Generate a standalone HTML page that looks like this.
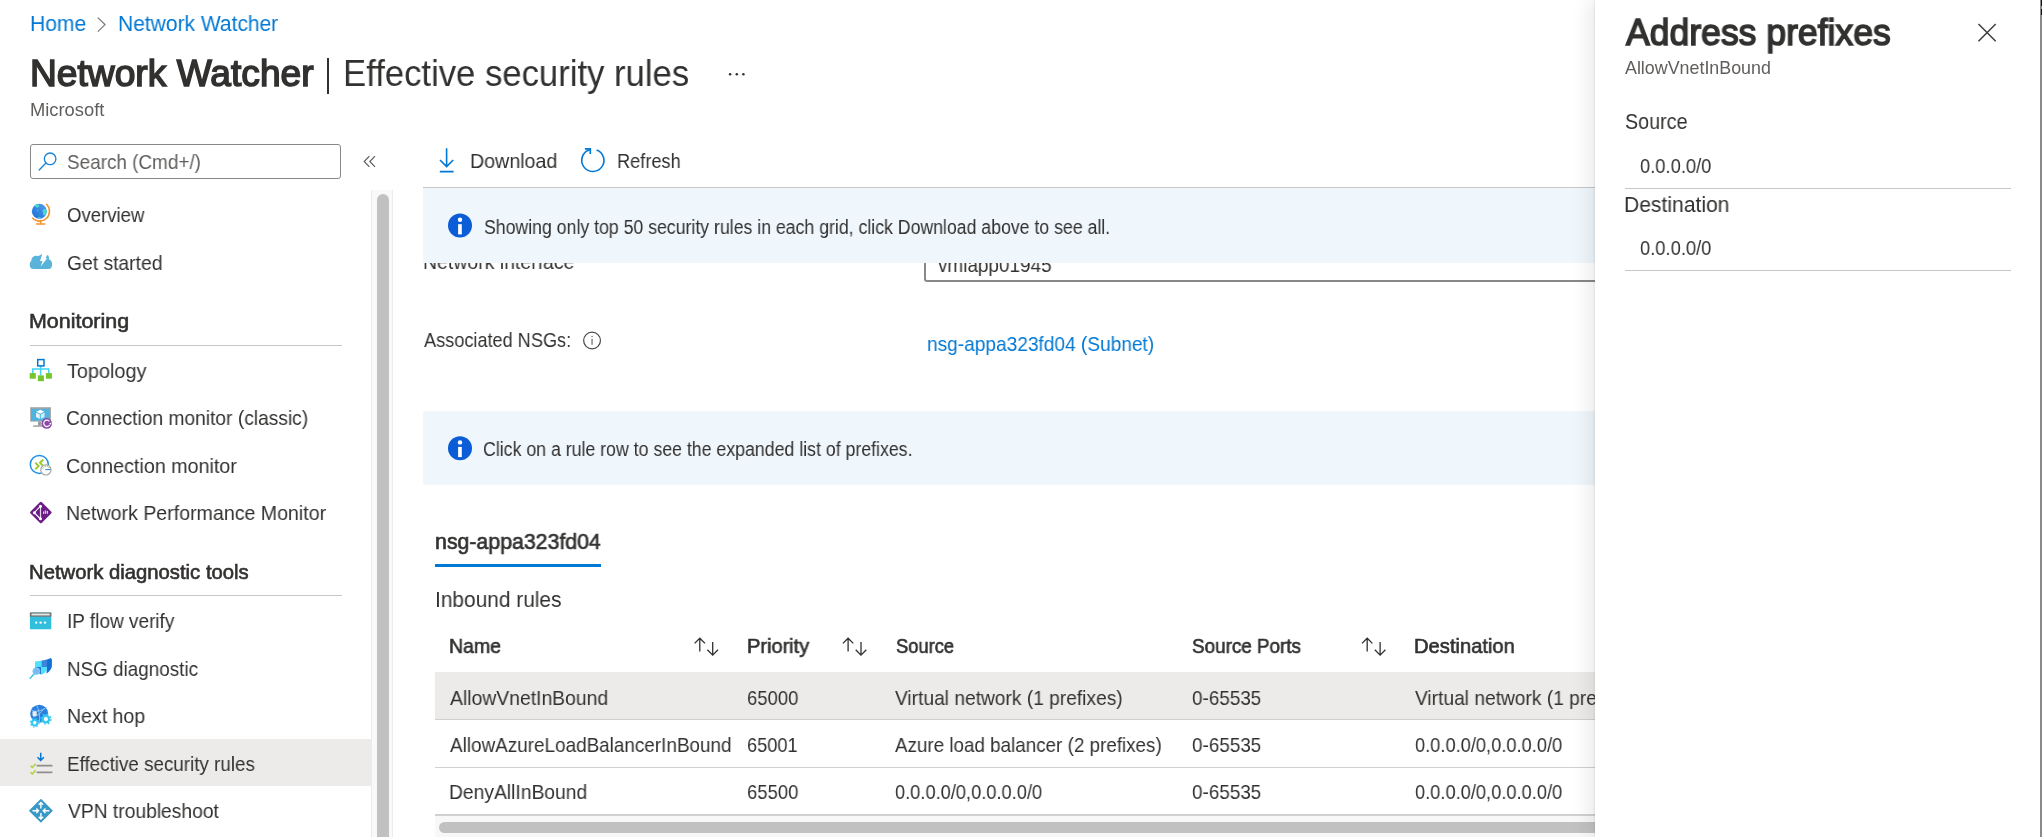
<!DOCTYPE html>
<html><head><meta charset="utf-8"><title>Network Watcher | Effective security rules</title>
<style>
html,body{margin:0;padding:0;background:#fff;}
body{width:2042px;height:837px;overflow:hidden;position:relative;font-family:"Liberation Sans",sans-serif;color:#323130;}
.t{position:absolute;white-space:pre;transform-origin:0 0;will-change:transform;font-family:"Liberation Sans",sans-serif;}
.a{position:absolute;}
svg{position:absolute;overflow:visible;}
</style></head><body>
<!-- breadcrumb -->
<div class="t" style="left:29.62px;top:14px;font-size:21.4px;line-height:21.4px;font-weight:400;color:#0078d4;transform:scaleX(0.9844)">Home</div>
<svg style="left:0;top:0" width="1" height="1"><path d="M97.8 17.6 L105 24.6 L97.8 31.6" fill="none" stroke="#7d7b79" stroke-width="1.3"/></svg>
<div class="t" style="left:118.42px;top:14px;font-size:21.4px;line-height:21.4px;font-weight:400;color:#0078d4;transform:scaleX(0.9814)">Network Watcher</div>
<!-- title -->
<div class="t" style="left:30.31px;top:56px;font-size:36.3px;line-height:36.3px;font-weight:400;color:#323130;transform:scaleX(1.0239);-webkit-text-stroke:1.52px #323130">Network Watcher</div>
<div class="a" style="left:327.2px;top:58.3px;width:2.2px;height:35.7px;background:#323130"></div>
<div class="t" style="left:342.79px;top:56px;font-size:36.3px;line-height:36.3px;font-weight:400;color:#323130;transform:scaleX(0.9552)">Effective security rules</div>
<svg style="left:0;top:0" width="1" height="1" fill="#323130"><circle cx="730.1" cy="74.2" r="1.25"/><circle cx="736.8" cy="74.2" r="1.25"/><circle cx="743.4" cy="74.2" r="1.25"/></svg>
<div class="t" style="left:29.59px;top:101px;font-size:18.2px;line-height:18.2px;font-weight:400;color:#605e5c;transform:scaleX(1.0080)">Microsoft</div>
<!-- search -->
<div class="a" style="left:30px;top:143.9px;width:308.8px;height:33.6px;border:1.3px solid #8a8886;border-radius:3px"></div>
<svg style="left:0;top:0" width="1" height="1"><circle cx="50.1" cy="158.8" r="5.8" fill="none" stroke="#1a86d9" stroke-width="1.35"/><path d="M45.9 163.1 L39.2 169.9" stroke="#1a86d9" stroke-width="1.4" stroke-linecap="round"/></svg>
<div class="t" style="left:67.30px;top:152px;font-size:20.2px;line-height:20.2px;font-weight:400;color:#605e5c;transform:scaleX(0.9367)">Search (Cmd+/)</div>
<svg style="left:0;top:0" width="1" height="1"><path d="M369.4 156.1 L364.2 161.5 L369.4 166.9 M375 156.1 L369.8 161.5 L375 166.9" fill="none" stroke="#605e5c" stroke-width="1.2"/></svg>
<!-- toolbar -->
<svg style="left:0;top:0" width="1" height="1"><path d="M446.6 148.2 L446.6 166.5 M440 160 L446.6 166.6 L453.2 160 M439.8 171.6 L453.6 171.6" fill="none" stroke="#0078d4" stroke-width="1.6"/></svg>
<div class="t" style="left:470.33px;top:151px;font-size:20.2px;line-height:20.2px;font-weight:400;color:#323130;transform:scaleX(0.9731)">Download</div>
<svg style="left:0;top:0" width="1" height="1"><path d="M596.6 149.9 A11.1 11.1 0 1 1 589.7 149.7" fill="none" stroke="#0078d4" stroke-width="1.6"/><path d="M584.9 148.8 H590.3 V153.9" fill="none" stroke="#0078d4" stroke-width="1.7"/></svg>
<div class="t" style="left:616.80px;top:151px;font-size:20.2px;line-height:20.2px;font-weight:400;color:#323130;transform:scaleX(0.9013)">Refresh</div>
<div class="a" style="left:423px;top:186.5px;width:1200px;height:1.5px;background:#c8c6c4"></div>

<!-- left nav -->
<svg style="left:0;top:0" width="1" height="1">
 <defs><linearGradient id="glb" x1="0" y1="1" x2="1" y2="0"><stop offset="0" stop-color="#1470d4"/><stop offset="1" stop-color="#5a9ef2"/></linearGradient></defs>
 <circle cx="39.35" cy="211.2" r="7.5" fill="url(#glb)"/>
 <path d="M34.6 205.2 Q37 203.6 39.3 205 Q39.6 207.4 37.2 207.8 Q35 207.6 34.6 205.2Z M43 209.5 Q45.5 208.3 46.8 210 Q46.9 213.5 45 215.3 Q43.6 215.6 42.8 214.3 Q43.8 213 42.6 211.8Z M36.2 209.8 L37.8 210 L37.4 211.6Z M37.6 217.5 Q39.3 216.3 41 217.5 Q39.3 218.9 37.6 217.5Z" fill="#46dcc4"/>
 <path d="M32.7 218.2 A9.8 9.8 0 0 0 46.6 204.3" fill="none" stroke="#f5922f" stroke-width="1.6" stroke-linecap="round"/>
 <path d="M40.7 220.5 V223.6 M36.6 224.1 H44.8" stroke="#f5922f" stroke-width="1.5" stroke-linecap="round"/>
</svg>
<div class="t" style="left:67.00px;top:205px;font-size:20.2px;line-height:20.2px;font-weight:400;color:#323130;transform:scaleX(0.9201)">Overview</div>
<svg style="left:0;top:0" width="1" height="1">
 <g fill="#5ab4da">
  <rect x="29.8" y="260.5" width="22.2" height="8.4" rx="3.6"/>
  <circle cx="36.2" cy="260.6" r="4.9"/>
  <circle cx="47.6" cy="263.6" r="4.4"/>
  <path d="M37.5 256.5 L42.3 253.9 L41 260 L37 260Z"/>
  <path d="M45.3 258.6 L47.2 255 L48.6 255.8 L49.3 260.5 L45 261Z"/>
 </g>
 <path d="M42.4 254.3 L40 260.9 L42.6 260.9 L40.6 266.4 L47.2 258.3 L44.6 258.3 L46.3 255.6 L45.3 255.3 Z" fill="#fff"/>
</svg>
<div class="t" style="left:66.54px;top:253px;font-size:20.2px;line-height:20.2px;font-weight:400;color:#323130;transform:scaleX(0.9556)">Get started</div>
<div class="t" style="left:29.24px;top:311px;font-size:20.2px;line-height:20.2px;font-weight:400;color:#323130;transform:scaleX(1.0615);-webkit-text-stroke:0.61px #323130">Monitoring</div>
<div class="a" style="left:30px;top:344.5px;width:312px;height:1.3px;background:#c8c6c4"></div>
<svg style="left:0;top:0" width="1" height="1">
 <path d="M40.6 366 V375.5 M32.8 378 V368.9 H48.8 V378" fill="none" stroke="#42d3f3" stroke-width="1.5"/>
 <rect x="37.7" y="359.6" width="6.3" height="6.3" fill="#fff" stroke="#0078d4" stroke-width="1.5"/>
 <rect x="29.7" y="373.1" width="6.1" height="5.6" fill="#74c62a"/>
 <rect x="37.9" y="375.4" width="6" height="5.8" fill="#74c62a"/>
 <rect x="45.9" y="373.1" width="6" height="5.6" fill="#74c62a"/>
</svg>
<div class="t" style="left:67.00px;top:361px;font-size:20.2px;line-height:20.2px;font-weight:400;color:#323130;transform:scaleX(0.9827)">Topology</div>
<svg style="left:0;top:0" width="1" height="1">
 <rect x="30.2" y="407.2" width="20.7" height="14.4" fill="#a3a3a3"/>
 <rect x="31" y="408.9" width="18.6" height="11.8" fill="#4fb3de"/>
 <path d="M40.3 409.8 L44.3 411.8 L40.3 413.8 L36.3 411.8Z" fill="#fff"/>
 <path d="M36 412.5 L39.8 414.4 L39.8 419 L36 417Z" fill="#e4f4fb"/>
 <path d="M44.6 412.5 L40.8 414.4 L40.8 419 L44.6 417Z" fill="#d0ecf8"/>
 <rect x="38" y="421.6" width="3" height="4" fill="#9a9a9a"/>
 <rect x="33.2" y="425.3" width="11" height="1.5" fill="#a0a0a0"/>
 <circle cx="46.7" cy="423.4" r="5.3" fill="#8b4aa8"/>
 <path d="M49.4 421.3 A3.2 3.2 0 1 0 49.8 424.7" fill="none" stroke="#fff" stroke-width="1.2"/>
 <path d="M49.2 423.3 L50.8 424.8 L51.6 422.6Z" fill="#fff"/>
</svg>
<div class="t" style="left:66.05px;top:408px;font-size:20.2px;line-height:20.2px;font-weight:400;color:#323130;transform:scaleX(0.9508)">Connection monitor (classic)</div>
<svg style="left:0;top:0" width="1" height="1">
 <circle cx="39.3" cy="464.4" r="9" fill="none" stroke="#1e8fe6" stroke-width="1.5"/>
 <path d="M35.3 462.6 L38.6 466 L35.3 469.4 M43.2 459.5 L40 462.7 L43.2 465.9" fill="none" stroke="#9ccc2c" stroke-width="2"/>
 <circle cx="45.9" cy="469.9" r="5.1" fill="#fff" stroke="#a8a8a8" stroke-width="1.2"/>
 <path d="M42.6 469 A3.6 3.6 0 0 1 49.4 468.5" fill="none" stroke="#8cc63f" stroke-width="1" stroke-dasharray="1 0.8"/>
 <path d="M45.2 469.6 H50.5" stroke="#2a7fd4" stroke-width="1"/>
</svg>
<div class="t" style="left:66.02px;top:456px;font-size:20.2px;line-height:20.2px;font-weight:400;color:#323130;transform:scaleX(0.9763)">Connection monitor</div>
<svg style="left:0;top:0" width="1" height="1">
 <path d="M40.85 503.3 L50.1 512.5 L40.85 521.7 L31.6 512.5Z" fill="#6b1f84" stroke="#6b1f84" stroke-width="3" stroke-linejoin="round"/>
 <path d="M40.5 506 L34.3 512.7 L40.5 519" fill="none" stroke="#fff" stroke-width="1.1"/>
 <path d="M40.5 506 V519" stroke="#e6d6ee" stroke-width="1.2"/>
 <g fill="#fff"><circle cx="40.5" cy="506.2" r="1.5"/><circle cx="34.4" cy="512.7" r="1.5"/><circle cx="40.5" cy="518.8" r="1.5"/></g>
 <rect x="43.2" y="511.5" width="1" height="2.3" fill="#fff"/>
 <rect x="44.8" y="510.4" width="1.3" height="3.4" fill="#d9c5e6"/>
 <rect x="46.7" y="510.9" width="1.3" height="2.9" fill="#d9c5e6"/>
</svg>
<div class="t" style="left:66.03px;top:503px;font-size:20.2px;line-height:20.2px;font-weight:400;color:#323130;transform:scaleX(0.9700)">Network Performance Monitor</div>
<div class="t" style="left:29.30px;top:562px;font-size:20.2px;line-height:20.2px;font-weight:400;color:#323130;transform:scaleX(1.0041);-webkit-text-stroke:0.61px #323130">Network diagnostic tools</div>
<div class="a" style="left:30px;top:594.5px;width:312px;height:1.3px;background:#c8c6c4"></div>
<svg style="left:0;top:0" width="1" height="1">
 <rect x="29.9" y="612.5" width="21.4" height="16.8" rx="0.8" fill="#32bedd"/>
 <rect x="29.9" y="612.5" width="21.4" height="4.2" fill="#767676"/>
 <rect x="31.5" y="613.6" width="18.2" height="1.8" fill="#e8e8e8"/>
 <circle cx="36.2" cy="622.6" r="1.2" fill="#fff"/><circle cx="40.6" cy="622.6" r="1.2" fill="#fff"/><circle cx="45" cy="622.6" r="1.2" fill="#fff"/>
</svg>
<div class="t" style="left:66.66px;top:611px;font-size:20.2px;line-height:20.2px;font-weight:400;color:#323130;transform:scaleX(0.9411)">IP flow verify</div>
<svg style="left:0;top:0" width="1" height="1">
 <defs><clipPath id="shf"><path d="M35 661.4 Q41 661 47 659.6 L47 669.5 Q45.5 673 41.5 674.8 Q36.5 672.5 35 668.5Z"/></clipPath></defs>
 <path d="M46.5 659.8 Q49.5 658.6 50.7 657.9 L51.9 659.4 L51.9 666.5 Q51 670.5 46.6 673.4Z" fill="#1470d2"/>
 <g clip-path="url(#shf)">
  <rect x="34" y="658" width="7.4" height="9" fill="#50e2fc"/>
  <rect x="41.4" y="658" width="7" height="9" fill="#3b85df"/>
  <rect x="34" y="667" width="7.4" height="9" fill="#2d78d6"/>
  <rect x="41.4" y="667" width="7" height="9" fill="#50e2fc"/>
 </g>
 <circle cx="36.2" cy="671.2" r="3.4" fill="#7fb6ee" stroke="#6fe0fb" stroke-width="0.9"/>
 <path d="M33.7 674.2 L30.2 678.2" stroke="#3cc9ec" stroke-width="1.6" stroke-linecap="round"/>
</svg>
<div class="t" style="left:66.67px;top:659px;font-size:20.2px;line-height:20.2px;font-weight:400;color:#323130;transform:scaleX(0.9341)">NSG diagnostic</div>
<svg style="left:0;top:0" width="1" height="1">
 <circle cx="39.2" cy="713.7" r="9" fill="#2a80dc"/>
 <path d="M31.5 710.5 Q38 713 46.5 707.5 M36.5 705 Q40 711 39.6 722.6 M33 717 Q39 716 44 709" fill="none" stroke="#9fd0f7" stroke-width="0.8"/>
 <rect x="32.5" y="711.2" width="4.2" height="5" rx="1.2" fill="#ececec"/>
 <g fill="#35c8f0">
  <circle cx="34.7" cy="722.7" r="3.8"/><circle cx="34.7" cy="722.7" r="4.3" fill="none" stroke="#35c8f0" stroke-width="1.1" stroke-dasharray="1.6 1.77"/>
  <circle cx="45.9" cy="719.1" r="4.5"/><circle cx="45.9" cy="719.1" r="5.1" fill="none" stroke="#35c8f0" stroke-width="1.2" stroke-dasharray="1.9 2.1"/>
 </g>
 <g fill="#fff"><circle cx="34.7" cy="722.7" r="1.7"/><circle cx="45.9" cy="719.1" r="2.1"/></g>
</svg>
<div class="t" style="left:66.63px;top:706px;font-size:20.2px;line-height:20.2px;font-weight:400;color:#323130;transform:scaleX(0.9677)">Next hop</div>
<div class="a" style="left:0;top:739.3px;width:371px;height:47.1px;background:#edebe9"></div>
<svg style="left:0;top:0" width="1" height="1">
 <path d="M40.7 752.7 V760.2 M37.5 757.3 L40.7 760.4 L43.9 757.3" fill="none" stroke="#0078d4" stroke-width="1.5"/>
 <path d="M30.5 765.8 L32.3 767.5 L35.6 763.8 M30.5 772.3 L32.3 774 L35.6 770.3" fill="none" stroke="#acd231" stroke-width="1.4"/>
 <path d="M37.3 765.7 H51.7 M37.3 772.3 H51.7" stroke="#8f8e8d" stroke-width="1.8" stroke-linecap="round"/>
</svg>
<div class="t" style="left:66.67px;top:754px;font-size:20.2px;line-height:20.2px;font-weight:400;color:#323130;transform:scaleX(0.9322)">Effective security rules</div>
<svg style="left:0;top:0" width="1" height="1">
 <path d="M40.9 799.8 L51.9 810.8 L40.9 821.8 L29.9 810.8Z" fill="#3999c6" stroke="#3999c6" stroke-width="1.5" stroke-linejoin="round"/>
 <path d="M40.9 802.5 V808.5 M38.7 804.7 L40.9 802.5 L43.1 804.7 M40.9 813 V819 M38.7 816.8 L40.9 819 L43.1 816.8 M32.5 810.8 H38.5 M36.3 808.6 L38.5 810.8 L36.3 813 M49.3 810.8 H43.3 M45.5 808.6 L43.3 810.8 L45.5 813" fill="none" stroke="#fff" stroke-width="1.4"/>
</svg>
<div class="t" style="left:67.60px;top:801px;font-size:20.2px;line-height:20.2px;font-weight:400;color:#323130;transform:scaleX(0.9532)">VPN troubleshoot</div>
<!-- left scrollbar -->
<div class="a" style="left:371px;top:190px;width:19.8px;height:660px;background:#f9f9f9;border-left:1px solid #ececec;border-right:1px solid #ececec"></div>
<div class="a" style="left:377px;top:193.8px;width:11.8px;height:660px;background:#c1c1c1;border-radius:6px"></div>

<!-- content -->
<div class="t" style="left:422.74px;top:252px;font-size:20.2px;line-height:20.2px;font-weight:400;color:#323130;transform:scaleX(0.9638)">Network interface</div>
<div class="a" style="left:924px;top:228px;width:800px;height:50px;border:2px solid #8a8886;border-radius:3px"></div>
<div class="t" style="left:938.00px;top:255px;font-size:20.2px;line-height:20.2px;font-weight:400;color:#323130;transform:scaleX(0.9373)">vmlapp01945</div>
<div class="a" style="left:423px;top:188px;width:1200px;height:74.8px;background:#eff6fc"></div>
<svg style="left:0;top:0" width="1" height="1">
 <circle cx="460" cy="225.5" r="12" fill="#0b5cd7"/>
 <circle cx="460" cy="219.7" r="2.2" fill="#fff"/>
 <rect x="458.1" y="224.2" width="3.7" height="10.2" fill="#fff"/>
</svg>
<div class="t" style="left:484.40px;top:218px;font-size:19.6px;line-height:19.6px;font-weight:400;color:#323130;transform:scaleX(0.9025)">Showing only top 50 security rules in each grid, click Download above to see all.</div>
<div class="t" style="left:423.50px;top:330px;font-size:20.2px;line-height:20.2px;font-weight:400;color:#323130;transform:scaleX(0.8983)">Associated NSGs:</div>
<svg style="left:0;top:0" width="1" height="1">
 <circle cx="592.05" cy="340.5" r="8.4" fill="none" stroke="#4a4846" stroke-width="1.2"/>
 <circle cx="592.05" cy="336.6" r="0.75" fill="#6a6866"/>
 <rect x="591.45" y="338.8" width="1.2" height="6" fill="#6a6866"/>
</svg>
<div class="t" style="left:926.65px;top:334px;font-size:20.2px;line-height:20.2px;font-weight:400;color:#0078d4;transform:scaleX(0.9456)">nsg-appa323fd04 (Subnet)</div>
<div class="a" style="left:423px;top:411px;width:1200px;height:73.6px;background:#eff6fc;border-radius:2px"></div>
<svg style="left:0;top:0" width="1" height="1">
 <circle cx="460" cy="448.2" r="12" fill="#0b5cd7"/>
 <circle cx="460" cy="442.4" r="2.2" fill="#fff"/>
 <rect x="458.1" y="446.9" width="3.7" height="10.2" fill="#fff"/>
</svg>
<div class="t" style="left:482.90px;top:440px;font-size:19.6px;line-height:19.6px;font-weight:400;color:#323130;transform:scaleX(0.9045)">Click on a rule row to see the expanded list of prefixes.</div>
<div class="t" style="left:434.72px;top:532px;font-size:21.4px;line-height:21.4px;font-weight:400;color:#323130;transform:scaleX(0.9960);-webkit-text-stroke:0.64px #323130">nsg-appa323fd04</div>
<div class="a" style="left:435px;top:563.9px;width:166px;height:3px;background:#0078d4"></div>
<div class="t" style="left:435.22px;top:590px;font-size:21.4px;line-height:21.4px;font-weight:400;color:#323130;transform:scaleX(0.9755)">Inbound rules</div>
<!-- table -->
<div class="t" style="left:449.44px;top:636px;font-size:20.2px;line-height:20.2px;font-weight:400;color:#323130;transform:scaleX(0.9671);-webkit-text-stroke:0.61px #323130">Name</div>
<svg style="left:0;top:0" width="1" height="1"><path d="M699.8 651.5 V638.2 M694.6 643.4 L699.8 638.2 L705.0 643.4 M712.7 641.9 V655 M707.4 649.8 L712.7 655.1 L718.0 649.8" fill="none" stroke="#323130" stroke-width="1.3"/></svg>
<div class="t" style="left:746.81px;top:636px;font-size:20.2px;line-height:20.2px;font-weight:400;color:#323130;transform:scaleX(0.9900);-webkit-text-stroke:0.61px #323130">Priority</div>
<svg style="left:0;top:0" width="1" height="1"><path d="M848.1 651.5 V638.2 M842.9 643.4 L848.1 638.2 L853.3 643.4 M861.0 641.9 V655 M855.7 649.8 L861.0 655.1 L866.3 649.8" fill="none" stroke="#323130" stroke-width="1.3"/></svg>
<div class="t" style="left:895.70px;top:636px;font-size:20.2px;line-height:20.2px;font-weight:400;color:#323130;transform:scaleX(0.9067);-webkit-text-stroke:0.61px #323130">Source</div>
<div class="t" style="left:1192.31px;top:636px;font-size:20.2px;line-height:20.2px;font-weight:400;color:#323130;transform:scaleX(0.9339);-webkit-text-stroke:0.61px #323130">Source Ports</div>
<svg style="left:0;top:0" width="1" height="1"><path d="M1367.2 651.5 V638.2 M1362.0 643.4 L1367.2 638.2 L1372.4 643.4 M1380.1 641.9 V655 M1374.8 649.8 L1380.1 655.1 L1385.4 649.8" fill="none" stroke="#323130" stroke-width="1.3"/></svg>
<div class="t" style="left:1414.11px;top:636px;font-size:20.2px;line-height:20.2px;font-weight:400;color:#323130;transform:scaleX(0.9982);-webkit-text-stroke:0.61px #323130">Destination</div>
<div class="a" style="left:435px;top:672px;width:1200px;height:47.6px;background:#edebe9"></div>
<div class="a" style="left:435px;top:719px;width:1200px;height:1.3px;background:#d2d0ce"></div>
<div class="a" style="left:435px;top:766.5px;width:1200px;height:1.3px;background:#d2d0ce"></div>
<div class="a" style="left:435px;top:814px;width:1200px;height:1.5px;background:#d2d0ce"></div>
<div class="a" style="left:435px;top:815.5px;width:1200px;height:30px;background:#f8f8f8"></div>
<div class="a" style="left:439.3px;top:821.8px;width:1200px;height:11px;background:#c1c1c1;border-radius:5.5px"></div>
<div class="t" style="left:450.00px;top:688px;font-size:20.2px;line-height:20.2px;font-weight:400;color:#323130;transform:scaleX(0.9588)">AllowVnetInBound</div><div class="t" style="left:746.59px;top:688px;font-size:20.2px;line-height:20.2px;font-weight:400;color:#323130;transform:scaleX(0.9142)">65000</div><div class="t" style="left:895.40px;top:688px;font-size:20.2px;line-height:20.2px;font-weight:400;color:#323130;transform:scaleX(0.9498)">Virtual network (1 prefixes)</div><div class="t" style="left:1192.00px;top:688px;font-size:20.2px;line-height:20.2px;font-weight:400;color:#323130;transform:scaleX(0.9342)">0-65535</div><div class="t" style="left:1414.80px;top:688px;font-size:20.2px;line-height:20.2px;font-weight:400;color:#323130;transform:scaleX(0.9498)">Virtual network (1 prefixes)</div>
<div class="t" style="left:449.60px;top:735px;font-size:20.2px;line-height:20.2px;font-weight:400;color:#323130;transform:scaleX(0.9361)">AllowAzureLoadBalancerInBound</div><div class="t" style="left:746.60px;top:735px;font-size:20.2px;line-height:20.2px;font-weight:400;color:#323130;transform:scaleX(0.8997)">65001</div><div class="t" style="left:895.40px;top:735px;font-size:20.2px;line-height:20.2px;font-weight:400;color:#323130;transform:scaleX(0.9320)">Azure load balancer (2 prefixes)</div><div class="t" style="left:1192.00px;top:735px;font-size:20.2px;line-height:20.2px;font-weight:400;color:#323130;transform:scaleX(0.9342)">0-65535</div><div class="t" style="left:1414.80px;top:735px;font-size:20.2px;line-height:20.2px;font-weight:400;color:#323130;transform:scaleX(0.9045)">0.0.0.0/0,0.0.0.0/0</div>
<div class="t" style="left:449.05px;top:782px;font-size:20.2px;line-height:20.2px;font-weight:400;color:#323130;transform:scaleX(0.9548)">DenyAllInBound</div><div class="t" style="left:746.59px;top:782px;font-size:20.2px;line-height:20.2px;font-weight:400;color:#323130;transform:scaleX(0.9142)">65500</div><div class="t" style="left:895.40px;top:782px;font-size:20.2px;line-height:20.2px;font-weight:400;color:#323130;transform:scaleX(0.9039)">0.0.0.0/0,0.0.0.0/0</div><div class="t" style="left:1192.00px;top:782px;font-size:20.2px;line-height:20.2px;font-weight:400;color:#323130;transform:scaleX(0.9342)">0-65535</div><div class="t" style="left:1414.80px;top:782px;font-size:20.2px;line-height:20.2px;font-weight:400;color:#323130;transform:scaleX(0.9045)">0.0.0.0/0,0.0.0.0/0</div>

<!-- panel -->
<div class="a" style="left:1595px;top:0;width:447px;height:837px;background:#fff;box-shadow:-1px 0 2px rgba(0,0,0,0.07),-6px 0 18px rgba(0,0,0,0.085)"></div>
<div class="t" style="left:1626.18px;top:14px;font-size:37.2px;line-height:37.2px;font-weight:400;color:#323130;transform:scaleX(0.9561);-webkit-text-stroke:1.56px #323130">Address prefixes</div>
<svg style="left:0;top:0" width="1" height="1"><path d="M1978.5 24 L1995.7 41.2 M1995.7 24 L1978.5 41.2" stroke="#3f3e3d" stroke-width="1.5"/></svg>
<div class="t" style="left:1625.00px;top:60px;font-size:17.8px;line-height:17.8px;font-weight:400;color:#605e5c;transform:scaleX(1.0040)">AllowVnetInBound</div>
<div class="t" style="left:1624.80px;top:112px;font-size:21.4px;line-height:21.4px;font-weight:400;color:#323130;transform:scaleX(0.9211)">Source</div>
<div class="t" style="left:1640.20px;top:156px;font-size:20.2px;line-height:20.2px;font-weight:400;color:#323130;transform:scaleX(0.9088)">0.0.0.0/0</div>
<div class="a" style="left:1625px;top:187.5px;width:386px;height:1.3px;background:#c8c6c4"></div>
<div class="t" style="left:1624.01px;top:195px;font-size:21.4px;line-height:21.4px;font-weight:400;color:#323130;transform:scaleX(0.9855)">Destination</div>
<div class="t" style="left:1640.20px;top:238px;font-size:20.2px;line-height:20.2px;font-weight:400;color:#323130;transform:scaleX(0.9088)">0.0.0.0/0</div>
<div class="a" style="left:1625px;top:270.2px;width:386px;height:1.3px;background:#c8c6c4"></div>
<div class="a" style="left:2040px;top:0;width:2px;height:837px;background:#8a8a8a"></div>
<div class="a" style="left:2040.5px;top:0;width:1.5px;height:5.7px;background:#111"></div>
<div class="a" style="left:2040.5px;top:9px;width:1.5px;height:5.7px;background:#111"></div>
</body></html>
